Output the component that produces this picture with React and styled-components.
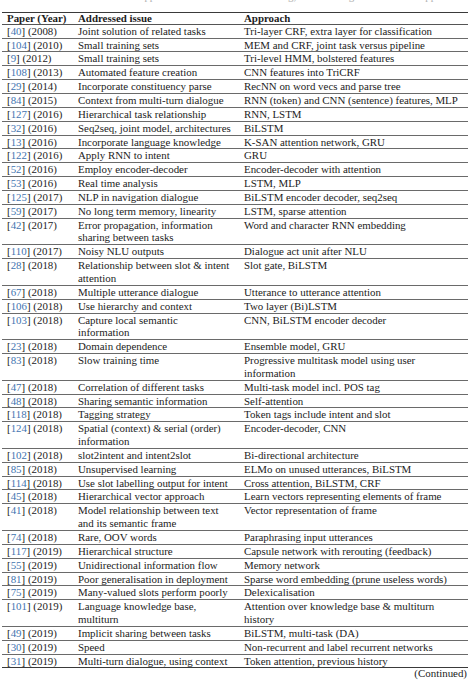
import React from "react"
import styled, { createGlobalStyle } from "styled-components"

const rows = [
    ["40", "2008", ["Joint solution of related tasks"], ["Tri-layer CRF, extra layer for classification"]],
    ["104", "2010", ["Small training sets"], ["MEM and CRF, joint task versus pipeline"]],
    ["9", "2012", ["Small training sets"], ["Tri-level HMM, bolstered features"]],
    ["108", "2013", ["Automated feature creation"], ["CNN features into TriCRF"]],
    ["29", "2014", ["Incorporate constituency parse"], ["RecNN on word vecs and parse tree"]],
    ["84", "2015", ["Context from multi-turn dialogue"], ["RNN (token) and CNN (sentence) features, MLP"]],
    ["127", "2016", ["Hierarchical task relationship"], ["RNN, LSTM"]],
    ["32", "2016", ["Seq2seq, joint model, architectures"], ["BiLSTM"]],
    ["13", "2016", ["Incorporate language knowledge"], ["K-SAN attention network, GRU"]],
    ["122", "2016", ["Apply RNN to intent"], ["GRU"]],
    ["52", "2016", ["Employ encoder-decoder"], ["Encoder-decoder with attention"]],
    ["53", "2016", ["Real time analysis"], ["LSTM, MLP"]],
    ["125", "2017", ["NLP in navigation dialogue"], ["BiLSTM encoder decoder, seq2seq"]],
    ["59", "2017", ["No long term memory, linearity"], ["LSTM, sparse attention"]],
    ["42", "2017", ["Error propagation, information", "sharing between tasks"], ["Word and character RNN embedding"]],
    ["110", "2017", ["Noisy NLU outputs"], ["Dialogue act unit after NLU"]],
    ["28", "2018", ["Relationship between slot & intent", "attention"], ["Slot gate, BiLSTM"]],
    ["67", "2018", ["Multiple utterance dialogue"], ["Utterance to utterance attention"]],
    ["106", "2018", ["Use hierarchy and context"], ["Two layer (Bi)LSTM"]],
    ["103", "2018", ["Capture local semantic", "information"], ["CNN, BiLSTM encoder decoder"]],
    ["23", "2018", ["Domain dependence"], ["Ensemble model, GRU"]],
    ["83", "2018", ["Slow training time"], ["Progressive multitask model using user", "information"]],
    ["47", "2018", ["Correlation of different tasks"], ["Multi-task model incl. POS tag"]],
    ["48", "2018", ["Sharing semantic information"], ["Self-attention"]],
    ["118", "2018", ["Tagging strategy"], ["Token tags include intent and slot"]],
    ["124", "2018", ["Spatial (context) & serial (order)", "information"], ["Encoder-decoder, CNN"]],
    ["102", "2018", ["slot2intent and intent2slot"], ["Bi-directional architecture"]],
    ["85", "2018", ["Unsupervised learning"], ["ELMo on unused utterances, BiLSTM"]],
    ["114", "2018", ["Use slot labelling output for intent"], ["Cross attention, BiLSTM, CRF"]],
    ["45", "2018", ["Hierarchical vector approach"], ["Learn vectors representing elements of frame"]],
    ["41", "2018", ["Model relationship between text", "and its semantic frame"], ["Vector representation of frame"]],
    ["74", "2018", ["Rare, OOV words"], ["Paraphrasing input utterances"]],
    ["117", "2019", ["Hierarchical structure"], ["Capsule network with rerouting (feedback)"]],
    ["55", "2019", ["Unidirectional information flow"], ["Memory network"]],
    ["81", "2019", ["Poor generalisation in deployment"], ["Sparse word embedding (prune useless words)"]],
    ["75", "2019", ["Many-valued slots perform poorly"], ["Delexicalisation"]],
    ["101", "2019", ["Language knowledge base,", "multiturn"], ["Attention over knowledge base & multiturn", "history"]],
    ["49", "2019", ["Implicit sharing between tasks"], ["BiLSTM, multi-task (DA)"]],
    ["30", "2019", ["Speed"], ["Non-recurrent and label recurrent networks"]],
    ["31", "2019", ["Multi-turn dialogue, using context"], ["Token attention, previous history"]],
]

export default function App() {
    return (
        <Page>
            <GlobalStyle />
            <Caption>
                <CaptionText>Table 3. Joint approaches to intent and slot filling, in chronological order with approach and key aspects of papers</CaptionText>
            </Caption>
            <Table>
                <HeaderRow>
                    <Cell>Paper (Year)</Cell>
                    <Cell>Addressed issue</Cell>
                    <Cell>Approach</Cell>
                </HeaderRow>
                {rows.map(([ref, year, issue, approach], i) => (
                    <Row key={ref} last={i === rows.length - 1}>
                        <Cell>
                            [<Ref>{ref}</Ref>] ({year})
                        </Cell>
                        <Cell>
                            {issue.map((line) => <Line key={line}>{line}</Line>)}
                        </Cell>
                        <Cell>
                            {approach.map((line) => <Line key={line}>{line}</Line>)}
                        </Cell>
                    </Row>
                ))}
            </Table>
            <Continued>(Continued)</Continued>
        </Page>
    )
}

const GlobalStyle = createGlobalStyle`
    html, body {
        margin: 0;
        padding: 0;
        background: #ffffff;
    }
`
const Page = styled.div`
    width: 474px;
    height: 680px;
    overflow: hidden;
    font-family: "Liberation Serif", "Times New Roman", serif;
    font-size: 10.9px;
    color: #1c1c1c;
    box-sizing: border-box;
    padding: 0 6px 0 2px;
`
const Caption = styled.div`
    height: 11.5px;
    overflow: hidden;
`
const CaptionText = styled.div`
    margin-top: -10.3px;
    padding-left: 76px;
    line-height: 12px;
    color: #b0b0b0;
    white-space: nowrap;
`
const Table = styled.div`
    border-top: 1.6px solid #3a3a3a;
    border-bottom: 1.6px solid #3a3a3a;
`
const Row = styled.div`
    display: grid;
    grid-template-columns: 71px 166px 1fr;
    line-height: 12.85px;
    border-bottom: ${({ last }) => last ? "none" : "1px solid #6a6a6a"};
`
const HeaderRow = styled(Row)`
    font-weight: bold;
    line-height: 10.8px;
    padding-top: 0.5px;
    border-bottom: 1px solid #555;
`
const Cell = styled.div`
    padding-left: 5px;
    white-space: nowrap;
`
const Line = styled.div``
const Ref = styled.span`
    color: #3f74b0;
`
const Continued = styled.div`
    text-align: right;
    padding-right: 1px;
    line-height: 11px;
`
